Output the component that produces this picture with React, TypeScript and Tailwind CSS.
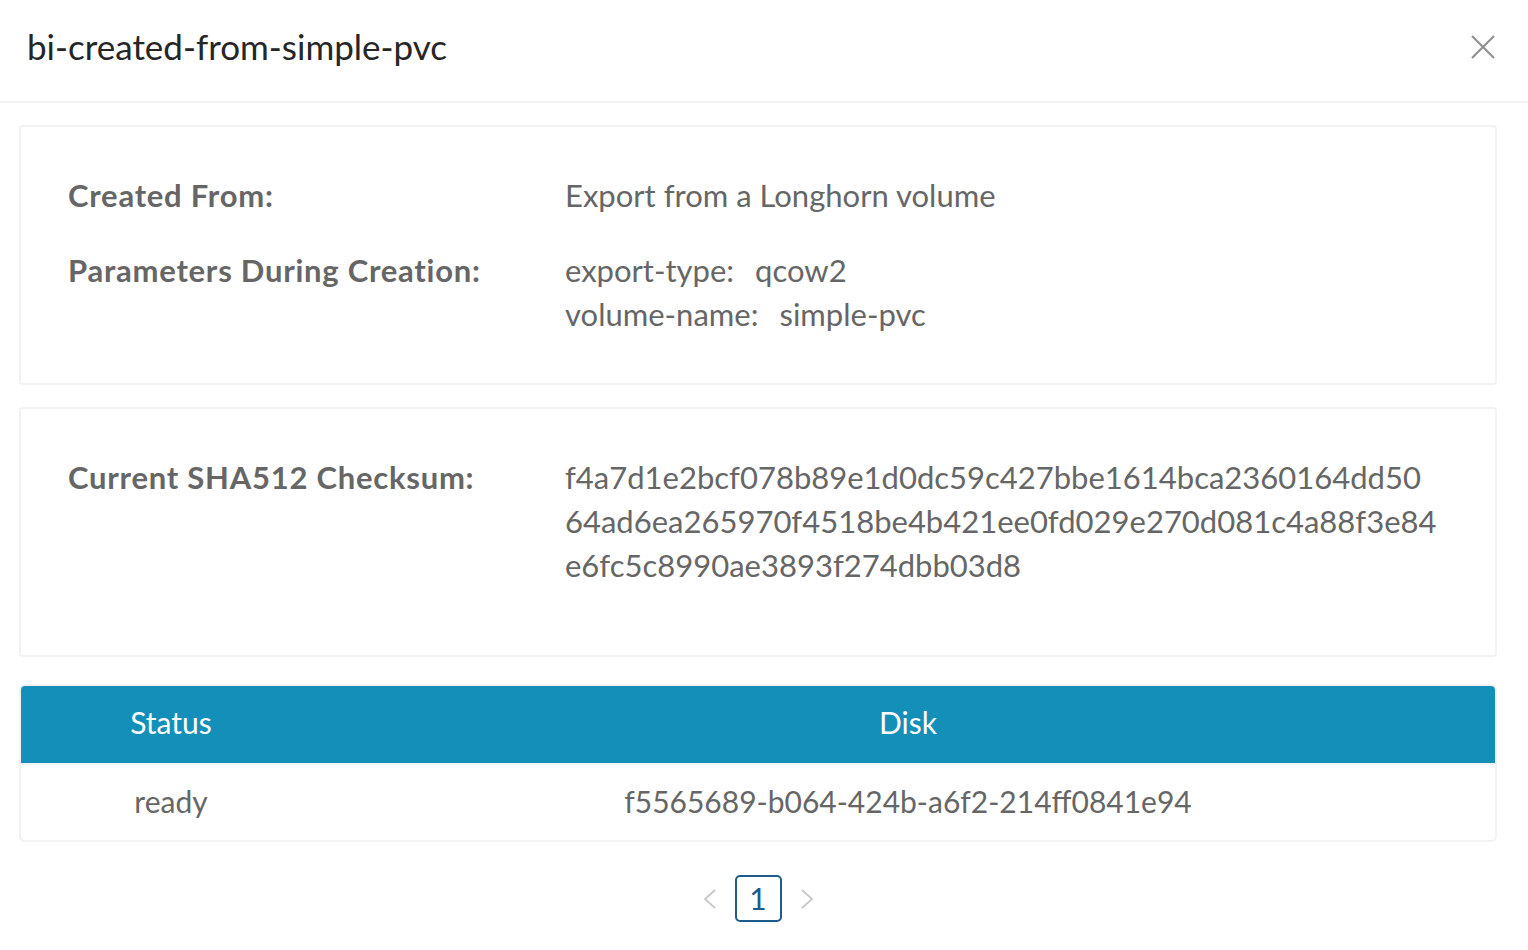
const params = [
  { key: 'export-type', value: 'qcow2' },
  { key: 'volume-name', value: 'simple-pvc' },
];

const checksum = [
  'f4a7d1e2bcf078b89e1d0dc59c427bbe1614bca2360164dd50',
  '64ad6ea265970f4518be4b421ee0fd029e270d081c4a88f3e84',
  'e6fc5c8990ae3893f274dbb03d8',
];

function Row({ label, children }: { label: string; children: React.ReactNode }) {
  return (
    <div className="flex">
      <div className="w-[497px] shrink-0 font-bold tracking-[0.75px] text-[#666] leading-[44px]">{label}</div>
      <div className="text-[#666] leading-[44px]">{children}</div>
    </div>
  );
}

function Chevron({ dir }: { dir: 'left' | 'right' }) {
  return (
    <svg width="14" height="20" viewBox="0 0 14 20" fill="none" stroke="#c8c8c8" strokeWidth="1.8">
      {dir === 'left' ? <polyline points="12,1 2,10 12,19" /> : <polyline points="2,1 12,10 2,19" />}
    </svg>
  );
}

export default function App() {
  return (
    <div className="min-h-[950px] bg-white text-[31px]" style={{ fontFamily: 'Lato, "Noto Sans", sans-serif' }}>
      <div className="h-[103px] flex items-center justify-between pl-[27px] pr-[33px] pb-[8px] border-b-2 border-[#f2f2f2]">
        <h1 className="text-[35px] text-[#262626]">bi-created-from-simple-pvc</h1>
        <svg width="24" height="24" viewBox="0 0 24 24" stroke="#8f8f8f" strokeWidth="2.2">
          <line x1="1" y1="1" x2="23" y2="23" />
          <line x1="23" y1="1" x2="1" y2="23" />
        </svg>
      </div>

      <div className="pl-[19px] pr-[31px] pt-[22px]">
        <div className="border-2 border-[#f2f2f2] rounded-[4px] pl-[47px] pt-[46px] pb-[47px] flex flex-col gap-[31px]">
          <Row label="Created From:">Export from a Longhorn volume</Row>
          <Row label="Parameters During Creation:">
            {params.map((p) => (
              <div key={p.key}>
                {p.key}:<span className="inline-block w-[21px]" />{p.value}
              </div>
            ))}
          </Row>
        </div>

        <div className="mt-[22px] border-2 border-[#f2f2f2] rounded-[4px] pl-[47px] pt-[46px] pb-[68px]">
          <Row label="Current SHA512 Checksum:">
            {checksum.map((c) => (
              <div key={c}>{c}</div>
            ))}
          </Row>
        </div>

        <div className="mt-[27px] border-2 border-[#f2f2f2] rounded-[6px] overflow-hidden text-[30px]">
          <div className="flex h-[77px] items-center bg-[#148fba] text-white pb-[5px]">
            <div className="w-[300px] text-center">Status</div>
            <div className="flex-1 text-center">Disk</div>
          </div>
          <div className="flex h-[77px] items-center border-t-2 border-[#f2f2f2] text-[#666] pb-[2px]">
            <div className="w-[300px] text-center">ready</div>
            <div className="flex-1 text-center">f5565689-b064-424b-a6f2-214ff0841e94</div>
          </div>
        </div>

        <div className="flex items-center justify-center gap-[18px] pt-[33px]">
          <Chevron dir="left" />
          <div className="w-[47px] h-[47px] flex items-center justify-center border-2 border-[#1d5b8c] rounded-[5px] text-[#1d5b8c] text-[30px]">
            1
          </div>
          <Chevron dir="right" />
        </div>
      </div>
    </div>
  );
}
